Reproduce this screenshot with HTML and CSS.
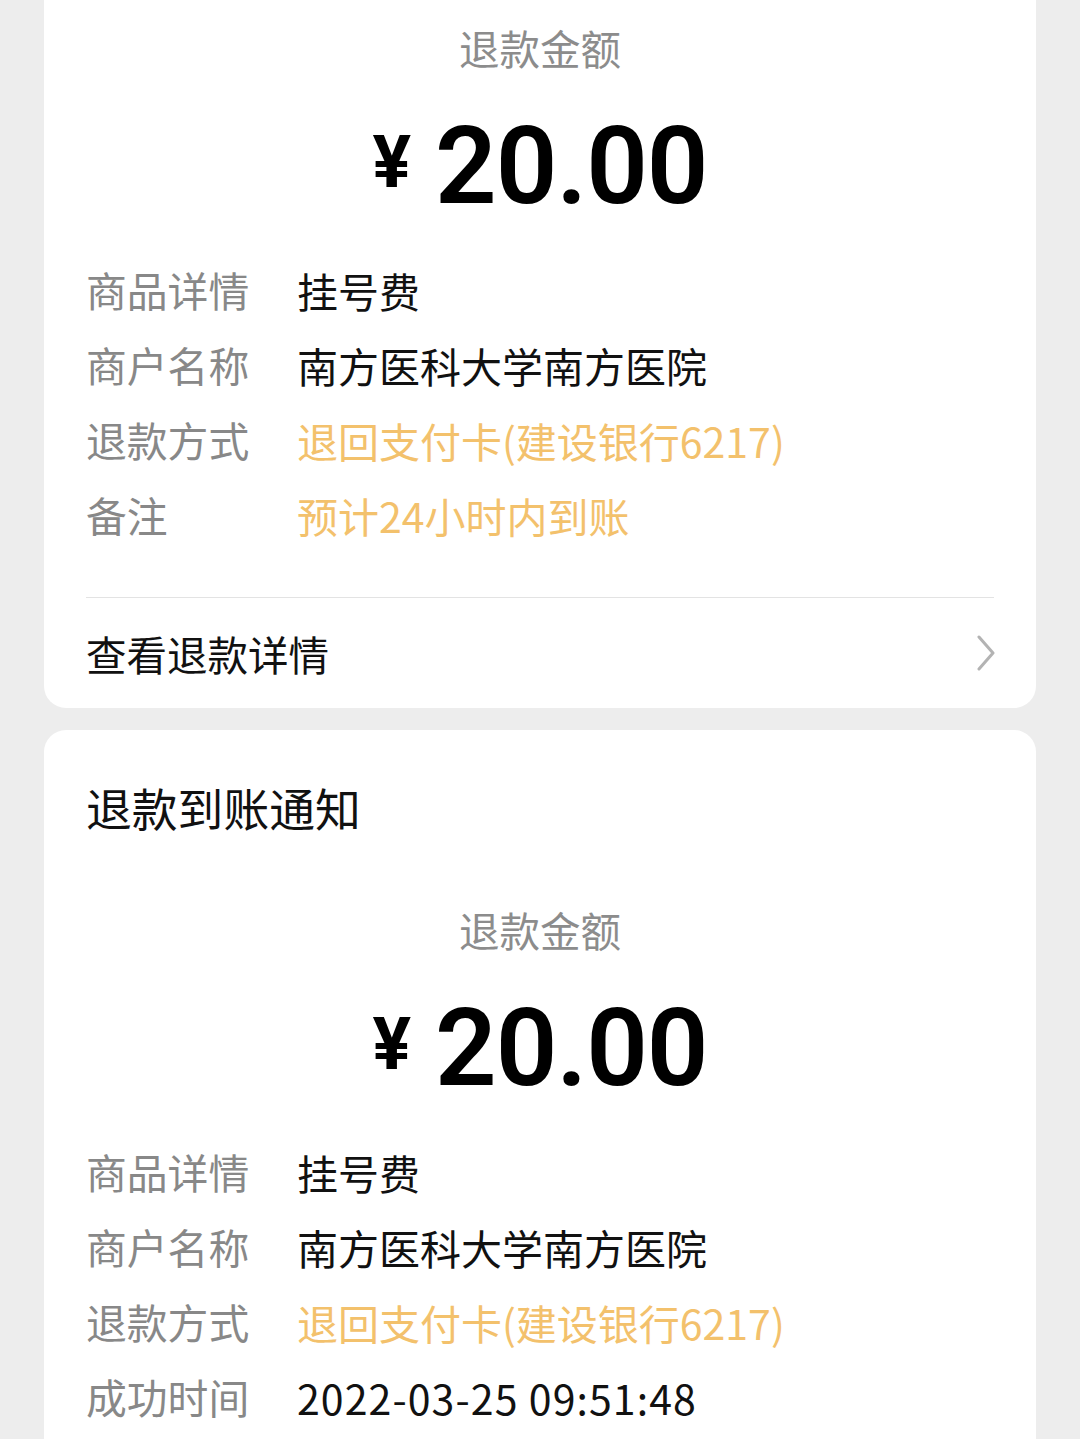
FILE: index.html
```html
<!DOCTYPE html>
<html lang="zh-CN">
<head>
<meta charset="utf-8">
<link rel="stylesheet" href="styles.css">
</head>
<body>
<div class="page">
  <section class="card card-first">
    <div class="amount-label">退款金额</div>
    <div class="amount"><span class="yen">¥</span><span class="num">20.00</span></div>
    <div class="rows">
      <div class="row"><span class="label">商品详情</span><span class="value">挂号费</span></div>
      <div class="row"><span class="label">商户名称</span><span class="value">南方医科大学南方医院</span></div>
      <div class="row"><span class="label">退款方式</span><span class="value orange">退回支付卡(建设银行6217)</span></div>
      <div class="row"><span class="label">备注</span><span class="value orange">预计24小时内到账</span></div>
    </div>
    <div class="divider"></div>
    <div class="link-row">
      <span class="link-text">查看退款详情</span>
      <svg class="chevron" width="20" height="36" viewBox="0 0 20 36"><path d="M3 2 L17 18 L3 34" fill="none" stroke="#b3b3b3" stroke-width="3" stroke-linecap="round" stroke-linejoin="round"/></svg>
    </div>
  </section>

  <section class="card card-second">
    <div class="card-title">退款到账通知</div>
    <div class="amount-label label-second">退款金额</div>
    <div class="amount"><span class="yen">¥</span><span class="num">20.00</span></div>
    <div class="rows">
      <div class="row"><span class="label">商品详情</span><span class="value">挂号费</span></div>
      <div class="row"><span class="label">商户名称</span><span class="value">南方医科大学南方医院</span></div>
      <div class="row"><span class="label">退款方式</span><span class="value orange">退回支付卡(建设银行6217)</span></div>
      <div class="row"><span class="label">成功时间</span><span class="value datetime">2022-03-25 09:51:48</span></div>
    </div>
  </section>
</div>
</body>
</html>
```

FILE: styles.css
```css
* { box-sizing: border-box; }
html, body {
  margin: 0;
  padding: 0;
  background: #ededed;
}
body {
  width: 1080px;
  height: 1439px;
  overflow: hidden;
  font-family: "Noto Sans CJK SC", "Noto Sans", sans-serif;
  color: #111111;
}
.page {
  padding: 0 44px;
  display: flex;
  flex-direction: column;
  gap: 22px;
}
.card {
  background: #ffffff;
  border-radius: 22px;
  padding: 0 42px 0 42px;
}
.card-first {
  margin-top: -22px;
  padding-top: 40px;
}
.card-second {
  padding-top: 47px;
  padding-bottom: 200px;
}
.card-title {
  font-size: 45.8px;
  line-height: 60px;
  color: #111111;
}
.amount-label {
  text-align: center;
  font-size: 40.5px;
  line-height: 60px;
  color: #8c8c8c;
}
.label-second {
  margin-top: 63px;
}
.amount {
  display: flex;
  justify-content: center;
  align-items: flex-start;
  margin-top: 28px;
  height: 120px;
}
.yen {
  font-family: Roboto, "Liberation Sans", sans-serif;
  font-weight: 700;
  font-size: 72px;
  line-height: 1;
  margin-top: 21px;
  margin-right: 24px;
  color: #000000;
}
.num {
  font-family: Roboto, "Liberation Sans", sans-serif;
  font-weight: 600;
  font-size: 108px;
  line-height: 120px;
  letter-spacing: -1px;
  color: #000000;
}
.rows {
  margin-top: 26px;
  display: flex;
  flex-direction: column;
}
.row {
  display: flex;
  height: 75px;
  align-items: center;
  font-size: 40.8px;
}
.label {
  width: 211px;
  flex: none;
  color: #888888;
}
.value {
  font-size: 41px;
  color: #111111;
}
.datetime {
  letter-spacing: 1.1px;
}
.orange {
  color: #f3c16c;
}
.divider {
  margin-top: 45px;
  height: 1px;
  background: #e3e3e3;
}
.link-row {
  height: 110px;
  display: flex;
  align-items: center;
  justify-content: space-between;
}
.link-text {
  font-size: 40.5px;
  color: #111111;
}
.chevron {
  display: block;
  margin-right: -2px;
}
```
